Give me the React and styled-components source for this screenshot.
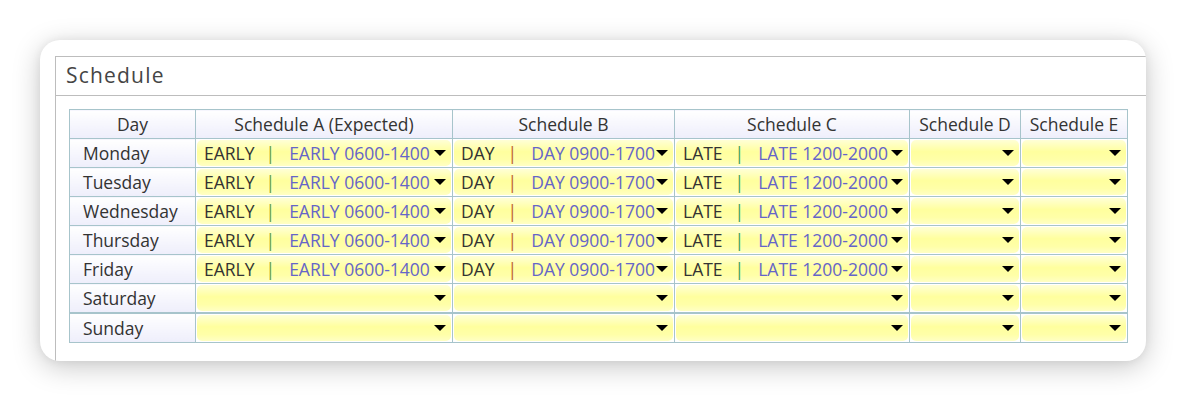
import React from 'react';
import styled, { createGlobalStyle } from 'styled-components';

const GlobalStyle = createGlobalStyle`
  html, body {
    margin: 0;
    padding: 0;
    background: #fff;
  }
  body {
    font-family: 'Open Sans', 'Noto Sans', sans-serif;
  }
`;

// Layout
const Page = styled.div`
  padding: 40px 41px 41px 40px;
`;

const Card = styled.div`
  height: 321px;
  background: #fff;
  border-radius: 20px;
  overflow: hidden;
  box-shadow: 0 6px 28px rgba(0, 0, 0, 0.22), 0 0 10px rgba(0, 0, 0, 0.06);
  padding: 16px 0 0 15px;
  box-sizing: border-box;
`;

const Panel = styled.div`
  height: 340px;
  margin-right: -20px;
  border: 1px solid #bdbdbd;
  box-sizing: border-box;
`;

const PanelHeader = styled.div`
  height: 39px;
  border-bottom: 1px solid #bdbdbd;
  display: flex;
  align-items: center;
  padding: 0 0 3px 10px;
  box-sizing: border-box;
`;

const Title = styled.h2`
  margin: 0;
  font-family: 'Open Sans', sans-serif;
  font-weight: 400;
  font-size: 21px;
  letter-spacing: 1.2px;
  color: #454545;
`;

const PanelBody = styled.div`
  padding: 13px 0 0 13px;
`;

// Table
const Grid = styled.table`
  border-collapse: collapse;
  table-layout: fixed;
  width: 1059px;
  font-size: 17.5px;
  color: #333;
`;

const HeadCell = styled.th`
  height: 28px;
  padding: 0;
  font-weight: 400;
  text-align: center;
  border: 1px solid #a7c4cb;
  background: linear-gradient(#ffffff, #eeeefb);
  white-space: nowrap;
  line-height: 24px;
`;

const DayCell = styled.td`
  padding: 0 0 0 13px;
  border: 1px solid #a7c4cb;
  border-top-width: ${(p) => (p.$heavy ? '2px' : '1px')};
  background: linear-gradient(#ffffff, #eeeefb);
  white-space: nowrap;
  line-height: 24px;
`;

const SlotCell = styled.td`
  padding: 1px;
  border: 1px solid #a7c4cb;
  border-top-width: ${(p) => (p.$heavy ? '2px' : '1px')};
  background: #fff;
`;

const Select = styled.div`
  height: 26px;
  line-height: 26px;
  border-radius: 5px;
  background: linear-gradient(#ffffd6, #ffff9e 45%, #ffffa8 75%, #ffffc4);
  display: flex;
  align-items: center;
  padding: 0 5px 0 7px;
  white-space: nowrap;
  overflow: hidden;
`;

const Code = styled.span`
  color: #333;
  margin-right: ${(p) => p.$gap}px;
`;

const Sep = styled.span`
  color: ${(p) => p.$color};
  margin-right: 14px;
`;

const Label = styled.span`
  color: #6565c9;
`;

const Caret = styled.span`
  margin-left: auto;
  width: 0;
  height: 0;
  border-left: 6px solid transparent;
  border-right: 6px solid transparent;
  border-top: 6px solid #000;
  flex-shrink: 0;
`;

const SHIFTS = {
  EARLY: { code: 'EARLY', label: 'EARLY 0600-1400', sep: '#5f9a3a', gap: 11 },
  DAY: { code: 'DAY', label: 'DAY 0900-1700', sep: '#c0602c', gap: 13 },
  LATE: { code: 'LATE', label: 'LATE 1200-2000', sep: '#3c9c5c', gap: 12 },
};

const COLUMNS = [
  { title: 'Schedule A (Expected)', width: 257 },
  { title: 'Schedule B', width: 222 },
  { title: 'Schedule C', width: 235 },
  { title: 'Schedule D', width: 111 },
  { title: 'Schedule E', width: 107 },
];

const WEEKDAY = ['EARLY', 'DAY', 'LATE', null, null];
const WEEKEND = [null, null, null, null, null];

const ROWS = [
  { day: 'Monday', slots: WEEKDAY },
  { day: 'Tuesday', slots: WEEKDAY },
  { day: 'Wednesday', slots: WEEKDAY },
  { day: 'Thursday', slots: WEEKDAY },
  { day: 'Friday', slots: WEEKDAY },
  { day: 'Saturday', slots: WEEKEND },
  { day: 'Sunday', slots: WEEKEND, heavy: true },
];

const ShiftSelect = ({ shift }) => {
  const s = shift && SHIFTS[shift];
  return (
    <Select>
      {s && (
        <>
          <Code $gap={s.gap}>{s.code}</Code>
          <Sep $color={s.sep}>|</Sep>
          <Label>{s.label}</Label>
        </>
      )}
      <Caret />
    </Select>
  );
};

const App = () => (
  <>
    <GlobalStyle />
    <Page>
      <Card>
        <Panel>
          <PanelHeader>
            <Title>Schedule</Title>
          </PanelHeader>
          <PanelBody>
            <Grid>
              <colgroup>
                <col style={{ width: 126 }} />
                {COLUMNS.map((c) => (
                  <col key={c.title} style={{ width: c.width }} />
                ))}
              </colgroup>
              <thead>
                <tr>
                  <HeadCell>Day</HeadCell>
                  {COLUMNS.map((c) => (
                    <HeadCell key={c.title}>{c.title}</HeadCell>
                  ))}
                </tr>
              </thead>
              <tbody>
                {ROWS.map((r) => (
                  <tr key={r.day}>
                    <DayCell $heavy={r.heavy}>{r.day}</DayCell>
                    {r.slots.map((shift, i) => (
                      <SlotCell key={i} $heavy={r.heavy}>
                        <ShiftSelect shift={shift} />
                      </SlotCell>
                    ))}
                  </tr>
                ))}
              </tbody>
            </Grid>
          </PanelBody>
        </Panel>
      </Card>
    </Page>
  </>
);

export default App;
